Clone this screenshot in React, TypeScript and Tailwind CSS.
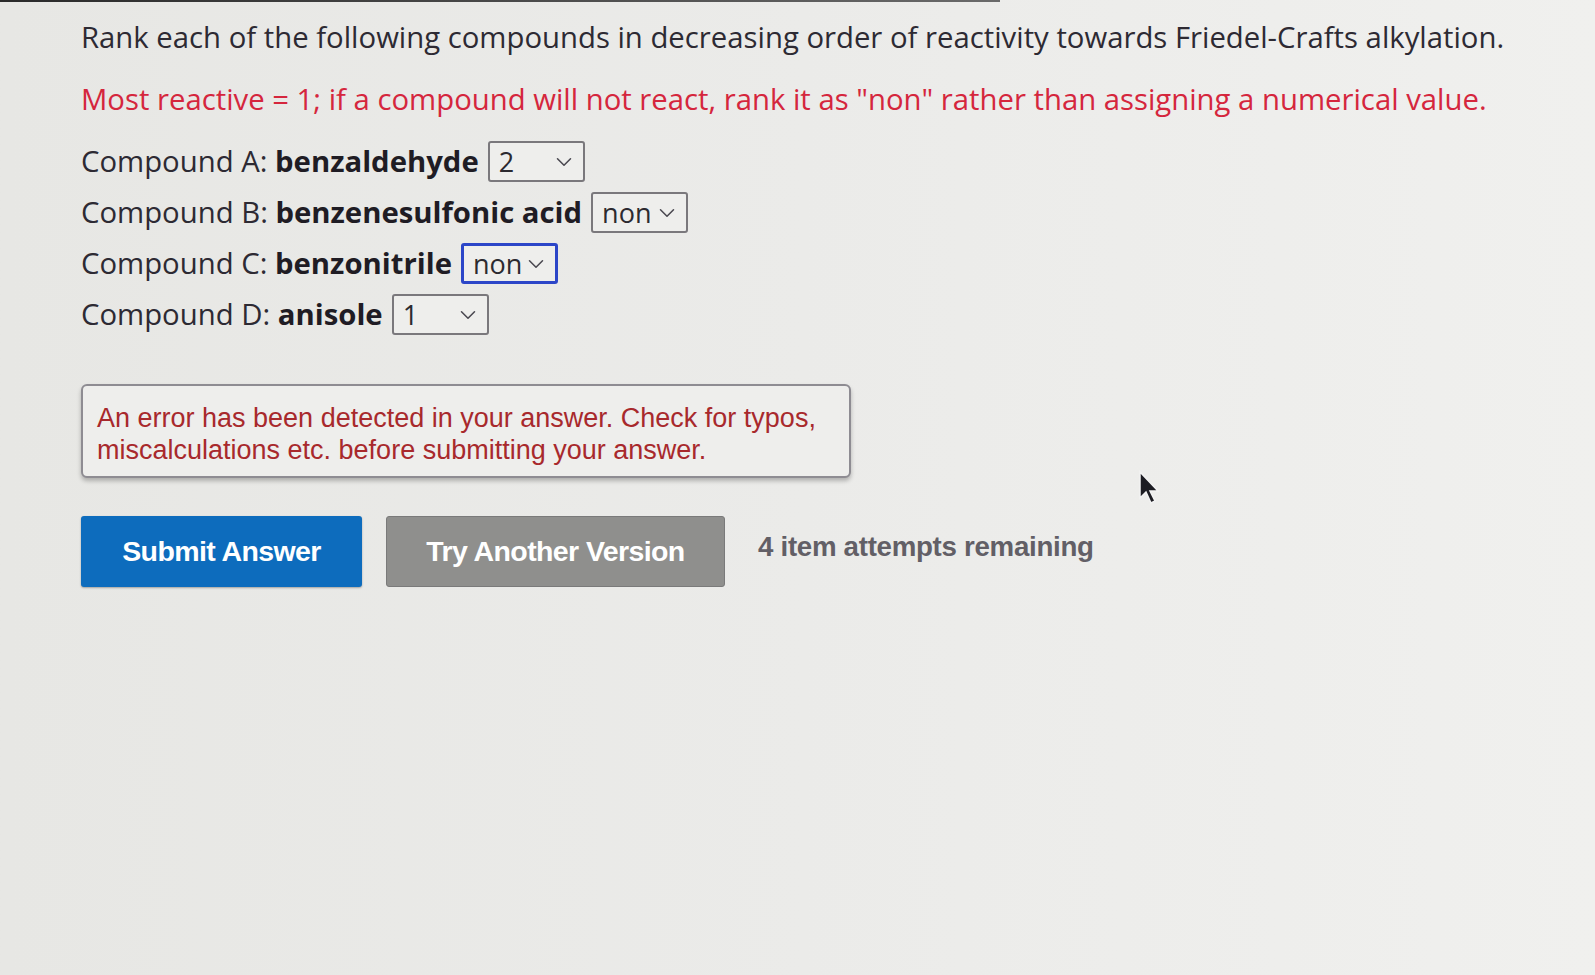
import { ChevronDown } from 'lucide-react'

const compounds = [
  { label: 'A', name: 'benzaldehyde', value: '2', focused: false },
  { label: 'B', name: 'benzenesulfonic acid', value: 'non', focused: false },
  { label: 'C', name: 'benzonitrile', value: 'non', focused: true },
  { label: 'D', name: 'anisole', value: '1', focused: false },
]

function RankSelect({ value, focused }: { value: string; focused: boolean }) {
  return (
    <div
      className={
        'ml-[9px] flex h-[41px] w-[97px] items-center justify-between rounded-[3px] bg-[#eeeeec] pl-[9px] pr-[6px] ' +
        (focused ? 'border-[3px] border-[#2c46c8]' : 'border-2 border-[#7a787c]')
      }
    >
      <span className="text-[27px] leading-none text-[#2c2a30]">{value}</span>
      <ChevronDown className="h-[26px] w-[26px] text-[#4a4850]" strokeWidth={1.4} />
    </div>
  )
}

export default function App() {
  return (
    <div className="relative h-[975px] w-[1595px] overflow-hidden bg-gradient-to-r from-[#e7e7e4] via-[#ebebe9] to-[#f0f0ee] font-['Open_Sans',sans-serif]">
      <div className="h-[2px] w-[1000px] bg-gradient-to-r from-[#2a2a2a] to-[#6a6a6a]" />
      <div className="pl-[81px] pt-[17px]">
        <h1 className="text-[29.3px] leading-[36px] text-[#2d2a33]">
          Rank each of the following compounds in decreasing order of reactivity towards Friedel-Crafts alkylation.
        </h1>
        <p className="mt-[26px] text-[29.3px] leading-[36px] text-[#d5263d]">
          Most reactive = 1; if a compound will not react, rank it as "non" rather than assigning a numerical value.
        </p>

        <div className="mt-[24px] flex flex-col gap-[10px]">
          {compounds.map((c) => (
            <div key={c.label} className="flex h-[41px] items-center text-[29.3px] text-[#2d2a33]">
              <span>Compound {c.label}:&nbsp;</span>
              <span className="font-bold text-[#1f1c24]">{c.name}</span>
              <RankSelect value={c.value} focused={c.focused} />
            </div>
          ))}
        </div>

        <div className="mt-[49px] w-[770px] rounded-[6px] border-2 border-[#8e8c92] bg-[#eeeeec] px-[14px] pb-[10px] pt-[17px] shadow-[0_3px_4px_rgba(0,0,0,0.25)] font-['Liberation_Sans',Arial,sans-serif] text-[27px] leading-[31.5px] text-[#a8292c]">
          An error has been detected in your answer. Check for typos,
          <br />
          miscalculations etc. before submitting your answer.
        </div>

        <div className="mt-[38px] flex items-center font-['Liberation_Sans',Arial,sans-serif]">
          <button className="h-[71px] w-[281px] rounded-[3px] bg-[#0d6cbd] text-[28.5px] font-bold tracking-[-0.6px] text-white shadow-[0_1px_2px_rgba(0,0,0,0.3)]">
            Submit Answer
          </button>
          <button className="ml-[24px] h-[71px] w-[339px] rounded-[3px] border border-[#7a7a7a] bg-[#8f8f8d] text-[28.5px] font-bold tracking-[-0.6px] text-white">
            Try Another Version
          </button>
          <span className="relative -top-[5px] ml-[33px] text-[27.7px] font-bold tracking-[-0.3px] text-[#625f66]">
            4 item attempts remaining
          </span>
        </div>
      </div>

      <svg className="absolute left-[1138px] top-[470px]" width="24" height="36" viewBox="0 0 24 36">
        <path d="M2 2 L2 28 L8 22 L13 33 L17 31 L12 21 L20 21 Z" fill="#1c1c22" stroke="#f2f2f2" strokeWidth="1.5" />
      </svg>
    </div>
  )
}
